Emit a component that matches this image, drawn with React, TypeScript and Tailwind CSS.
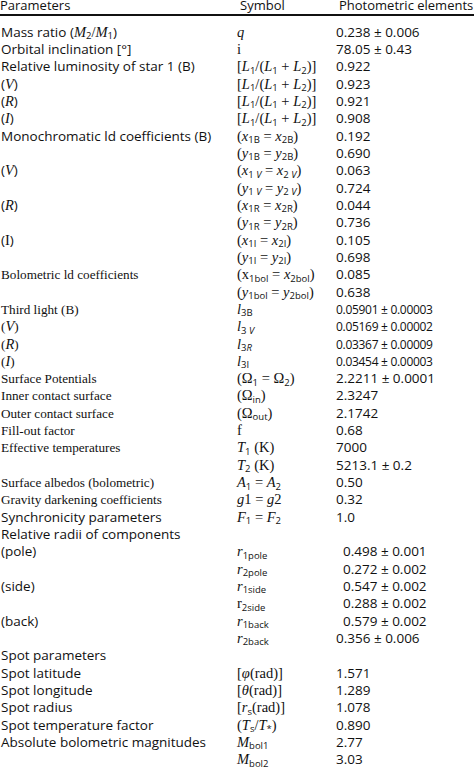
import type { ReactNode } from "react";

// math helpers
const I = ({ children }: { children: ReactNode }) => (
  <span className="font-['Liberation_Serif',serif] italic text-[14.5px]">{children}</span>
);
const R = ({ children }: { children: ReactNode }) => (
  <span className="font-['Liberation_Serif',serif] text-[14.5px]">{children}</span>
);
const S = ({ children }: { children: ReactNode }) => (
  <sub className="font-['Open_Sans',sans-serif] not-italic text-[9.5px]">{children}</sub>
);

interface Row {
  param?: ReactNode;
  serif?: boolean;
  symbol?: ReactNode;
  value?: ReactNode;
  narrow?: boolean;
  shift?: boolean;
}

const lum = (
  <>
    <R>[</R>
    <I>L</I>
    <S>1</S>
    <R>/(</R>
    <I>L</I>
    <S>1</S>
    <R> + </R>
    <I>L</I>
    <S>2</S>
    <R>)]</R>
  </>
);

const eq = (a: string, s1: ReactNode, s2: ReactNode) => (
  <>
    <R>(</R>
    <I>{a}</I>
    <S>{s1}</S>
    <R> = </R>
    <I>{a}</I>
    <S>{s2}</S>
    <R>)</R>
  </>
);

const rows: Row[] = [
  {
    param: (
      <>
        Mass ratio (<I>M</I>
        <S>2</S>
        <R>/</R>
        <I>M</I>
        <S>1</S>)
      </>
    ),
    symbol: <I>q</I>,
    value: "0.238 ± 0.006",
  },
  { param: "Orbital inclination [°]", symbol: <R>i</R>, value: "78.05 ± 0.43" },
  { param: "Relative luminosity of star 1 (B)", symbol: lum, value: "0.922" },
  { param: <>(<I>V</I>)</>, symbol: lum, value: "0.923" },
  { param: <>(<I>R</I>)</>, symbol: lum, value: "0.921" },
  { param: <>(<I>I</I>)</>, symbol: lum, value: "0.908" },
  { param: "Monochromatic ld coefficients (B)", symbol: eq("x", "1B", "2B"), value: "0.192" },
  { symbol: eq("y", "1B", "2B"), value: "0.690" },
  { param: <>(<I>V</I>)</>, symbol: eq("x", <>1 <i>V</i></>, <>2 <i>V</i></>), value: "0.063" },
  { symbol: eq("y", <>1 <i>V</i></>, <>2 <i>V</i></>), value: "0.724" },
  { param: <>(<I>R</I>)</>, symbol: eq("x", "1R", "2R"), value: "0.044" },
  { symbol: eq("y", "1R", "2R"), value: "0.736" },
  { param: <>(<R>I</R>)</>, symbol: eq("x", "1I", "2I"), value: "0.105" },
  { symbol: eq("y", "1I", "2I"), value: "0.698" },
  {
    param: "Bolometric ld coefficients",
    serif: true,
    symbol: (
      <>
        <R>(x</R>
        <S>1bol</S>
        <R> = </R>
        <I>x</I>
        <S>2bol</S>
        <R>)</R>
      </>
    ),
    value: "0.085",
  },
  { symbol: eq("y", "1bol", "2bol"), value: "0.638" },
  { param: "Third light (B)", serif: true, symbol: <><I>l</I><S>3B</S></>, value: "0.05901 ± 0.00003", narrow: true },
  { param: <>(<I>V</I>)</>, serif: true, symbol: <><I>l</I><S>3 <i>V</i></S></>, value: "0.05169 ± 0.00002", narrow: true },
  { param: <>(<I>R</I>)</>, serif: true, symbol: <><I>l</I><S>3<i>R</i></S></>, value: "0.03367 ± 0.00009", narrow: true },
  { param: <>(<I>I</I>)</>, serif: true, symbol: <><I>l</I><S>3I</S></>, value: "0.03454 ± 0.00003", narrow: true },
  {
    param: "Surface Potentials",
    serif: true,
    symbol: (
      <>
        <R>(Ω</R>
        <S>1</S>
        <R> = Ω</R>
        <S>2</S>
        <R>)</R>
      </>
    ),
    value: "2.2211 ± 0.0001",
  },
  { param: "Inner contact surface", serif: true, symbol: <><R>(Ω</R><S>in</S><R>)</R></>, value: "2.3247" },
  { param: "Outer contact surface", serif: true, symbol: <><R>(Ω</R><S>out</S><R>)</R></>, value: "2.1742" },
  { param: "Fill-out factor", serif: true, symbol: <R>f</R>, value: "0.68" },
  { param: "Effective temperatures", serif: true, symbol: <><I>T</I><S>1</S><R> (K)</R></>, value: "7000" },
  { symbol: <><I>T</I><S>2</S><R> (K)</R></>, value: "5213.1 ± 0.2" },
  {
    param: "Surface albedos (bolometric)",
    serif: true,
    symbol: <><I>A</I><S>1</S><R> = </R><I>A</I><S>2</S></>,
    value: "0.50",
  },
  { param: "Gravity darkening coefficients", serif: true, symbol: <><I>g</I><R>1 = </R><I>g</I><R>2</R></>, value: "0.32" },
  { param: "Synchronicity parameters", symbol: <><I>F</I><S>1</S><R> = </R><I>F</I><S>2</S></>, value: "1.0" },
  { param: "Relative radii of components" },
  { param: "(pole)", symbol: <><I>r</I><S>1pole</S></>, value: "0.498 ± 0.001", shift: true },
  { symbol: <><I>r</I><S>2pole</S></>, value: "0.272 ± 0.002", shift: true },
  { param: "(side)", symbol: <><I>r</I><S>1side</S></>, value: "0.547 ± 0.002", shift: true },
  { symbol: <><R>r</R><S>2side</S></>, value: "0.288 ± 0.002", shift: true },
  { param: "(back)", symbol: <><I>r</I><S>1back</S></>, value: "0.579 ± 0.002", shift: true },
  { symbol: <><I>r</I><S>2back</S></>, value: "0.356 ± 0.006" },
  { param: "Spot parameters" },
  { param: "Spot latitude", symbol: <><R>[</R><I>φ</I><R>(rad)]</R></>, value: "1.571" },
  { param: "Spot longitude", symbol: <><R>[</R><I>θ</I><R>(rad)]</R></>, value: "1.289" },
  { param: "Spot radius", symbol: <><R>[</R><I>r</I><S>s</S><R>(rad)]</R></>, value: "1.078" },
  {
    param: "Spot temperature factor",
    symbol: <><R>(</R><I>T</I><S>s</S><R>/</R><I>T</I><S>*</S><R>)</R></>,
    value: "0.890",
  },
  { param: "Absolute bolometric magnitudes", symbol: <><I>M</I><S>bol1</S></>, value: "2.77" },
  { symbol: <><I>M</I><S>bol2</S></>, value: "3.03" },
];

export default function App() {
  return (
    <div className="w-[474px] h-[768px] overflow-hidden bg-white text-[#111] font-['Open_Sans',sans-serif] text-[13.5px]">
      <div className="-mt-[3px]">
        {/* header */}
        <div className="grid grid-cols-[240px_99px_1fr] h-[17px] leading-[17px] whitespace-nowrap text-[13px]">
          <div>Parameters</div>
          <div>Symbol</div>
          <div>Photometric elements</div>
        </div>
        <div className="h-[2px] bg-[#111]" />
        <div className="h-[7.6px]" />

        {rows.map((row, i) => (
          <div
            key={i}
            className="grid grid-cols-[236px_99px_1fr] h-[17.33px] leading-[17.33px] whitespace-nowrap pl-[1px]"
          >
            <div className={row.serif ? "font-['Liberation_Serif',serif] text-[13.2px]" : ""}>
              {row.param}
            </div>
            <div>{row.symbol}</div>
            <div
              className={
                (row.narrow ? "text-[12px] tracking-[-0.3px] " : "") + (row.shift ? "pl-[7px]" : "")
              }
            >
              {row.value}
            </div>
          </div>
        ))}
      </div>
    </div>
  );
}
